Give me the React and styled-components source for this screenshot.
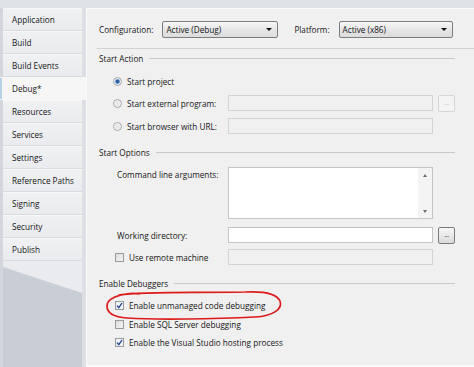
import React from 'react'
import styled, { createGlobalStyle } from 'styled-components'

const GlobalStyle = createGlobalStyle`
html, body {
  margin: 0;
  padding: 0;
  background: #dfe2e7;
}
* {
  box-sizing: border-box;
}
`;

const Page = styled.div`
width: 474px;
height: 367px;
overflow: hidden;
display: flex;
padding-top: 8px;
background: #dfe2e7;
font-family: "Open Sans", "Noto Sans", sans-serif;
font-size: 8.2px;
color: #161616;
`;

const Sidebar = styled.div`
width: 86px;
flex-shrink: 0;
display: flex;
flex-direction: column;
background: #c9ced6;
border-left: 3px solid #d3d7dd;
border-right: 4px solid #dcdfe4;
`;

const Tab = styled.div`
height: 23px;
display: flex;
align-items: center;
padding-left: ${({ $active }) => ($active ? '12px' : '9px')};
background: ${({ $active }) => ($active ? '#f6f6f6' : 'linear-gradient(#f0f1f3, #e9ebee)')};
border-bottom: 1px solid ${({ $active }) => ($active ? '#f6f6f6' : '#d8dbe0')};
border-top: 1px solid ${({ $active }) => ($active ? '#f6f6f6' : '#f8f8f9')};
margin-left: ${({ $active }) => ($active ? '-3px' : '0')};
margin-right: ${({ $active }) => ($active ? '-5px' : '0')};
box-shadow: ${({ $active }) => ($active ? 'inset 2px 0 0 #b7cfe9' : 'none')};
white-space: nowrap;
`;

const TabTail = styled.div`
height: 32px;
background: #e9ebee;
clip-path: polygon(0 0, 100% 0, 100% 100%, 0 6px);
`;

const Main = styled.div`
flex: 1;
display: flex;
flex-direction: column;
background: #f0f0f0;
border-left: 1px solid #fafafa;
border-top: 1px solid #fafafa;
border-bottom: 2px solid #fafafa;
`;

const TopBar = styled.div`
display: flex;
align-items: center;
margin-left: 10px;
padding: 12px 0 10px 2px;
border-bottom: 1px solid #d2d2d2;
`;

const TopLabel = styled.span`
margin-right: ${({ $gap }) => $gap}px;
`;

const Select = styled.div`
width: ${({ $w }) => $w}px;
height: 17px;
display: flex;
align-items: center;
justify-content: space-between;
padding: 0 5px 0 3px;
margin-right: 16px;
border: 1px solid #7d7d7d;
border-radius: 2px;
background: linear-gradient(#f7f7f7, #e6e6e6 50%, #dcdcdc);
`;

const Arrow = styled.span`
width: 0;
height: 0;
border-left: 3px solid transparent;
border-right: 3px solid transparent;
border-top: 3px solid #111;
`;

const Content = styled.div`
padding: 0 19px 0 12px;
display: flex;
flex-direction: column;
`;

const Header = styled.div`
height: 14px;
margin-top: ${({ $mt }) => $mt}px;
display: flex;
align-items: center;
gap: 6px;
&::after {
  content: '';
  flex: 1;
  height: 1px;
  background: #c9c9c9;
}
`;

const Row = styled.div`
display: flex;
align-items: ${({ $top }) => ($top ? 'flex-start' : 'center')};
height: ${({ $h }) => $h || 16}px;
margin-top: ${({ $mt }) => $mt}px;
`;

const Label = styled.div`
width: 129px;
flex-shrink: 0;
display: flex;
align-items: center;
gap: 5px;
padding-left: ${({ $indent }) => $indent}px;
margin-top: ${({ $top }) => ($top ? '2px' : '0')};
white-space: nowrap;
`;

const Radio = styled.span`
width: 9px;
height: 9px;
border-radius: 50%;
flex-shrink: 0;
border: 1px solid #a9a9a9;
background: ${({ $on }) => ($on
    ? 'radial-gradient(circle, #2d5e9a 0 1.6px, #8fb5de 2.2px, #e8eef6 3px)'
    : 'radial-gradient(circle, #e4e4e4, #f6f6f6)')};
`;

const Check = styled.span`
width: 9px;
height: 9px;
flex-shrink: 0;
display: flex;
align-items: center;
justify-content: center;
border: 1px solid #9a9a9a;
background: ${({ $on }) => ($on ? '#eef3fa' : 'linear-gradient(135deg, #dcdcdc, #f6f6f6)')};
`;

const TextBox = styled.div`
flex: 1;
height: 100%;
display: flex;
border: 1px solid ${({ $on }) => ($on ? '#c4c4c4' : '#d3d3d3')};
background: ${({ $on }) => ($on ? '#ffffff' : '#f0f0f0')};
`;

const Scroll = styled.div`
width: 14px;
margin-left: auto;
display: flex;
flex-direction: column;
justify-content: space-between;
align-items: center;
padding: 6px 0 5px;
background: #f4f4f4;
`;

const ScrollArrow = styled.span`
width: 0;
height: 0;
border-left: 2.5px solid transparent;
border-right: 2.5px solid transparent;
border-${({ $up }) => ($up ? 'bottom' : 'top')}: 3px solid #6d6d6d;
`;

const Slot = styled.div`
width: 22px;
flex-shrink: 0;
display: flex;
justify-content: flex-end;
`;

const Browse = styled.div`
width: 17px;
height: 17px;
display: flex;
align-items: center;
justify-content: center;
padding-bottom: 2px;
font-size: 7px;
letter-spacing: -0.5px;
border: 1px solid ${({ $on }) => ($on ? '#7a7a7a' : '#d6d6d6')};
border-radius: 2px;
color: ${({ $on }) => ($on ? '#333' : '#c0c0c0')};
background: ${({ $on }) => ($on ? 'linear-gradient(#f7f7f7, #dadada)' : '#f4f4f4')};
`;

const CheckRow = styled.div`
display: flex;
align-items: center;
gap: 5px;
height: 14px;
padding-left: 16px;
margin-top: ${({ $mt }) => $mt}px;
`;

const Debuggers = styled.div`
position: relative;
display: flex;
flex-direction: column;
`;

const Circle = styled.svg`
position: absolute;
left: 6px;
top: -1px;
`;

const tabs = ['Application', 'Build', 'Build Events', 'Debug*', 'Resources', 'Services', 'Settings', 'Reference Paths', 'Signing', 'Security', 'Publish']

function Tick() {
    return (
        <svg width="7" height="7" viewBox="0 0 7 7">
            <path d="M1 3.6 L2.8 5.6 L6 1" fill="none" stroke="#1f3f8a" strokeWidth="1.3" />
        </svg>
    )
}

function Dots() {
    return <span>...</span>
}

export default function App() {
    return (
        <>
            <GlobalStyle />
            <Page>
                <Sidebar>
                    {tabs.map((t) => (
                        <Tab key={t} $active={t === 'Debug*'}>{t}</Tab>
                    ))}
                    <TabTail />
                </Sidebar>
                <Main>
                    <TopBar>
                        <TopLabel $gap={9}>Configuration:</TopLabel>
                        <Select $w={116}>Active (Debug)<Arrow /></Select>
                        <TopLabel $gap={9}>Platform:</TopLabel>
                        <Select $w={114}>Active (x86)<Arrow /></Select>
                    </TopBar>
                    <Content>
                        <Header $mt={2}>Start Action</Header>
                        <Row $mt={8}>
                            <Label $indent={14}><Radio $on />Start project</Label>
                        </Row>
                        <Row $mt={6}>
                            <Label $indent={14}><Radio />Start external program:</Label>
                            <TextBox />
                            <Slot><Browse><Dots /></Browse></Slot>
                        </Row>
                        <Row $mt={7}>
                            <Label $indent={14}><Radio />Start browser with URL:</Label>
                            <TextBox />
                            <Slot />
                        </Row>

                        <Header $mt={11}>Start Options</Header>
                        <Row $mt={8} $h={52} $top>
                            <Label $indent={18} $top>Command line arguments:</Label>
                            <TextBox $on>
                                <Scroll><ScrollArrow $up /><ScrollArrow /></Scroll>
                            </TextBox>
                            <Slot />
                        </Row>
                        <Row $mt={8}>
                            <Label $indent={18}>Working directory:</Label>
                            <TextBox $on />
                            <Slot><Browse $on><Dots /></Browse></Slot>
                        </Row>
                        <Row $mt={6}>
                            <Label $indent={16}><Check />Use remote machine</Label>
                            <TextBox />
                            <Slot />
                        </Row>

                        <Header $mt={11}>Enable Debuggers</Header>
                        <Debuggers>
                            <CheckRow $mt={8}><Check $on><Tick /></Check>Enable unmanaged code debugging</CheckRow>
                            <CheckRow $mt={5}><Check />Enable SQL Server debugging</CheckRow>
                            <CheckRow $mt={4}><Check $on><Tick /></Check>Enable the Visual Studio hosting process</CheckRow>
                            <Circle width="180" height="32" viewBox="0 0 180 32">
                                <path
                                    d="M14 6 C40 2 90 4 140 3 C160 2 172 5 175 12 C178 20 168 27 150 28 C110 30 50 31 22 29 C8 28 2 24 2 17 C2 11 8 8 16 6 C24 4 30 4 34 5"
                                    fill="none"
                                    stroke="#dc1b1b"
                                    strokeWidth="1.7"
                                    strokeLinecap="round"
                                />
                            </Circle>
                        </Debuggers>
                    </Content>
                </Main>
            </Page>
        </>
    )
}
